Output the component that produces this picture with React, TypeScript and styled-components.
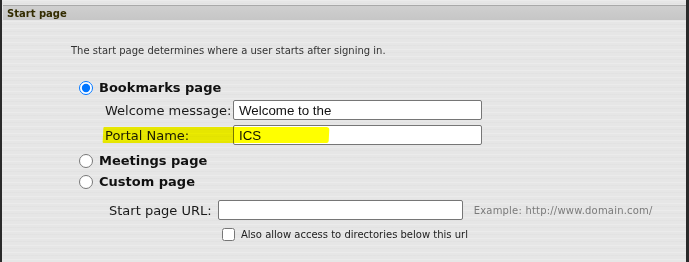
import React from "react";
import styled, { createGlobalStyle } from "styled-components";

const GlobalStyle = createGlobalStyle`
  html, body {
    margin: 0;
    padding: 0;
    background: #2a2a2a;
  }
`;

const Frame = styled.div`
  display: flex;
  width: 689px;
  height: 262px;
  overflow: hidden;
  background: #2a2a2a;
`;

const Panel = styled.div`
  flex: 1;
  margin-left: 2px;
  margin-right: 3px;
  display: flex;
  flex-direction: column;
  background-color: #e6e6e6;
  background-image:
    repeating-linear-gradient(180deg,
      rgba(255, 255, 255, 0.22) 0px, rgba(255, 255, 255, 0.22) 1px,
      transparent 1px, transparent 3px,
      rgba(0, 0, 0, 0.015) 3px, rgba(0, 0, 0, 0.015) 4px,
      transparent 4px, transparent 7px);
  font-family: "DejaVu Sans", Verdana, sans-serif;
`;

const Header = styled.div`
  margin-top: 5px;
  margin-left: 1px;
  height: 14px;
  border-top: 1px solid #a9a9a9;
  background: linear-gradient(180deg, #cfcfcf 0%, #c6c6c6 100%);
  display: flex;
  align-items: center;
  padding-left: 4px;
  font-size: 10px;
  font-weight: bold;
  color: #332c00;
`;

const Intro = styled.p`
  margin: 25px 0 0 69px;
  font-size: 10px;
  color: #333;
`;

const Options = styled.div`
  position: relative;
  margin: 21px 0 0 77px;
  display: flex;
  flex-direction: column;
`;

const Choice = styled.label`
  display: flex;
  align-items: center;
  height: 21px;
  font-size: 13px;
  font-weight: bold;
  color: #111;

  input {
    margin: 0 6px 0 0;
    width: 14px;
    height: 14px;
  }
`;

const FieldGrid = styled.div`
  display: grid;
  grid-template-columns: 128px 249px;
  row-gap: 5px;
  align-items: center;
  margin: 2px 0 5px 26px;
`;

const FieldLabel = styled.span`
  font-size: 13px;
  color: #1a1a1a;
`;

const TextBox = styled.input<{ $width: number }>`
  box-sizing: border-box;
  width: ${(p) => p.$width}px;
  height: 20px;
  margin: 0;
  padding: 0 5px;
  border: 1px solid #767676;
  border-radius: 2px;
  background: #fff;
  font-family: "Liberation Sans", Arial, sans-serif;
  font-size: 13.33px;
  color: #111;
`;

const Highlight = styled.div`
  position: absolute;
  left: 24px;
  top: 50px;
  width: 226px;
  height: 16px;
  background: #ffff00;
  mix-blend-mode: multiply;
  border-radius: 1px 3px 2px 1px;
  transform: skewX(-3deg);
`;

const UrlRow = styled.div`
  display: flex;
  align-items: center;
  margin: 8px 0 0 30px;
  gap: 6px;
`;

const Hint = styled.span`
  margin-left: 5px;
  font-size: 10px;
  letter-spacing: 0.2px;
  color: #7a7a7a;
`;

const Allow = styled.label`
  display: flex;
  align-items: center;
  margin: 8px 0 0 143px;
  font-size: 10px;
  color: #222;

  input {
    margin: 0 6px 0 0;
    width: 13px;
    height: 13px;
  }
`;

export default function App() {
  return (
    <>
      <GlobalStyle />
      <Frame>
        <Panel>
          <Header>Start page</Header>
          <Intro>The start page determines where a user starts after signing in.</Intro>
          <Options>
            <Choice>
              <input type="radio" name="start" defaultChecked />
              Bookmarks page
            </Choice>
            <FieldGrid>
              <FieldLabel>Welcome message:</FieldLabel>
              <TextBox $width={249} defaultValue="Welcome to the" />
              <FieldLabel>Portal Name:</FieldLabel>
              <TextBox $width={249} defaultValue="ICS" />
            </FieldGrid>
            <Highlight />
            <Choice>
              <input type="radio" name="start" />
              Meetings page
            </Choice>
            <Choice>
              <input type="radio" name="start" />
              Custom page
            </Choice>
            <UrlRow>
              <FieldLabel>Start page URL:</FieldLabel>
              <TextBox $width={245} defaultValue="" />
              <Hint>Example: http://www.domain.com/</Hint>
            </UrlRow>
            <Allow>
              <input type="checkbox" />
              Also allow access to directories below this url
            </Allow>
          </Options>
        </Panel>
      </Frame>
    </>
  );
}
